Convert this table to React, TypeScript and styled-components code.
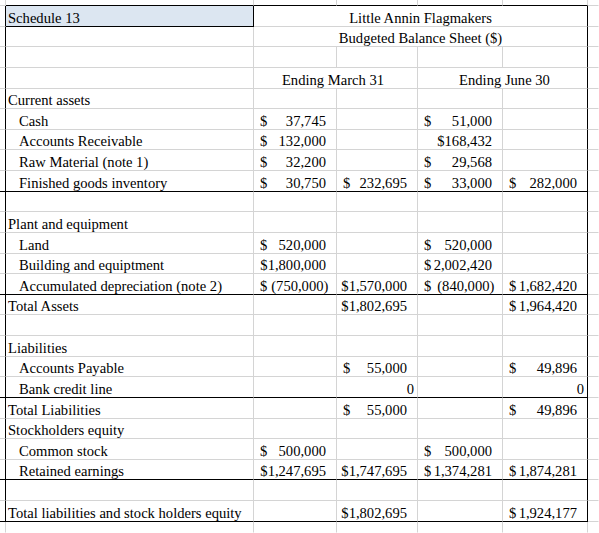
import styled, { createGlobalStyle } from 'styled-components';

type Line = 'gray' | 'black' | 'none';

//金額セルの種類
type Amount =
  | { kind: 'acct'; value: string }
  | { kind: 'cur'; value: string }
  | { kind: 'plain'; value: string }
  | null;

type RowData = {
  label?: string;
  indent?: boolean;
  boxed?: boolean;
  title?: string;
  ending?: [string, string];
  cells?: Amount[];
  rule?: boolean;
};

const acct = (value: string): Amount => ({ kind: 'acct', value });
const cur = (value: string): Amount => ({ kind: 'cur', value });
const plain = (value: string): Amount => ({ kind: 'plain', value });

const rows: RowData[] = [
  { label: 'Schedule 13', boxed: true, title: 'Little Annin Flagmakers' },
  { title: 'Budgeted Balance Sheet ($)' },
  {},
  { ending: ['Ending March 31', 'Ending June 30'] },
  { label: 'Current assets' },
  { label: 'Cash', indent: true, cells: [acct('37,745'), null, acct('51,000'), null] },
  { label: 'Accounts Receivable', indent: true, cells: [acct('132,000'), null, cur('$168,432'), null] },
  { label: 'Raw Material (note 1)', indent: true, cells: [acct('32,200'), null, acct('29,568'), null] },
  {
    label: 'Finished goods inventory',
    indent: true,
    cells: [acct('30,750'), acct('232,695'), acct('33,000'), acct('282,000')],
    rule: true,
  },
  {},
  { label: 'Plant and equipment' },
  { label: 'Land', indent: true, cells: [acct('520,000'), null, acct('520,000'), null] },
  { label: 'Building and equiptment', indent: true, cells: [cur('$1,800,000'), null, acct('2,002,420'), null] },
  {
    label: 'Accumulated depreciation (note 2)',
    indent: true,
    cells: [acct('(750,000)'), cur('$1,570,000'), acct('(840,000)'), acct('1,682,420')],
    rule: true,
  },
  { label: 'Total Assets', cells: [null, cur('$1,802,695'), null, acct('1,964,420')] },
  {},
  { label: 'Liabilities' },
  { label: 'Accounts Payable', indent: true, cells: [null, acct('55,000'), null, acct('49,896')] },
  { label: 'Bank credit line', indent: true, cells: [null, plain('0'), null, plain('0')], rule: true },
  { label: 'Total Liabilities', cells: [null, acct('55,000'), null, acct('49,896')] },
  { label: 'Stockholders equity' },
  { label: 'Common stock', indent: true, cells: [acct('500,000'), null, acct('500,000'), null] },
  {
    label: 'Retained earnings',
    indent: true,
    cells: [cur('$1,247,695'), cur('$1,747,695'), acct('1,374,281'), acct('1,874,281')],
    rule: true,
  },
  {},
  {
    label: 'Total liabilities and stock holders equity',
    cells: [null, cur('$1,802,695'), null, acct('1,924,177')],
    rule: true,
  },
];

const AmountValue = ({ amount, last }: { amount: Amount; last: boolean }) => {
  const right: Line = last ? 'black' : 'gray';
  if (!amount) return <Cell $right={right} />;
  if (amount.kind === 'plain') {
    return <AmountCell $right={right} $kind="plain">{amount.value}</AmountCell>;
  }
  if (amount.kind === 'cur') {
    return <AmountCell $right={right} $kind="cur">{amount.value}</AmountCell>;
  }
  const negative = amount.value.endsWith(')');
  return (
    <AmountCell $right={right} $kind="acct">
      <span>$</span>
      {negative ? (
        <span>
          {amount.value.slice(0, -1)}
          <Paren>)</Paren>
        </span>
      ) : (
        <span>{amount.value}</span>
      )}
    </AmountCell>
  );
};

export default function App() {
  return (
    <>
      <GlobalStyle />
      <Sheet>
        {/* 上の見切れ行 */}
        <Cell />
        {[0, 1, 2, 3, 4].map(i => (
          <Cell key={i} $bottom="black" />
        ))}
        <Cell $right="none" />

        {rows.map((row, r) => {
          const bottom: Line = row.rule ? 'black' : 'gray';
          return [
            <Cell key={`${r}-edge`} $right="black" $bottom={bottom} />,
            <LabelCell
              key={`${r}-a`}
              $indent={row.indent}
              $fill={row.boxed ? '#dce6f1' : undefined}
              $right={row.boxed ? 'black' : 'gray'}
              $bottom={row.boxed ? 'black' : bottom}
            >
              {row.label}
            </LabelCell>,
            ...(row.title
              ? [
                  <TitleCell key={`${r}-t`} $span={4} $right="black" $bottom={bottom}>
                    {row.title}
                  </TitleCell>,
                ]
              : row.ending
                ? [
                    <TitleCell key={`${r}-e1`} $span={2} $bottom={bottom} $shift={-5}>
                      {row.ending[0]}
                    </TitleCell>,
                    <TitleCell key={`${r}-e2`} $span={2} $right="black" $bottom={bottom} $shift={4}>
                      {row.ending[1]}
                    </TitleCell>,
                  ]
                : [0, 1, 2, 3].map(c =>
                    row.rule ? (
                      <RuledWrap key={`${r}-${c}`}>
                        <AmountValue amount={row.cells?.[c] ?? null} last={c === 3} />
                      </RuledWrap>
                    ) : (
                      <AmountValue key={`${r}-${c}`} amount={row.cells?.[c] ?? null} last={c === 3} />
                    ),
                  )),
            <Cell key={`${r}-f`} $right="none" />,
          ];
        })}

        {/* 下の見切れ行 */}
        {[0, 1, 2, 3, 4, 5].map(i => (
          <Cell key={`b${i}`} $bottom="none" />
        ))}
        <Cell $right="none" $bottom="none" />
      </Sheet>
    </>
  );
}

const lineColor = (line: Line) => {
  if (line === 'black') return '#000';
  if (line === 'gray') return '#d4d4d4';
  return 'transparent';
};

const GlobalStyle = createGlobalStyle`
  html, body {
    margin: 0;
    padding: 0;
    background: #fff;
  }
  body {
    font-family: "Liberation Serif", "Times New Roman", serif;
    font-size: 14.6px;
    color: #000;
  }
`;

const Sheet = styled.div`
  display: grid;
  grid-template-columns: 6px 248px 83px 81px 85px 85px 1fr;
  grid-template-rows: 6px repeat(25, 20.64px) 1fr;
  width: 599px;
  height: 533px;
  overflow: hidden;
`;

const Cell = styled.div<{ $right?: Line; $bottom?: Line; $span?: number; $fill?: string }>`
  box-sizing: border-box;
  min-width: 0;
  display: flex;
  align-items: flex-end;
  line-height: 16px;
  white-space: nowrap;
  grid-column: span ${p => p.$span ?? 1};
  border-right: 1px solid ${p => lineColor(p.$right ?? 'gray')};
  border-bottom: 1px solid ${p => lineColor(p.$bottom ?? 'gray')};
  background: ${p => p.$fill ?? 'transparent'};
`;

// 罫線の行では中のセルの下線を黒にする
const RuledWrap = styled.div`
  display: contents;
  & > div {
    border-bottom-color: #000;
  }
`;

const LabelCell = styled(Cell)<{ $indent?: boolean }>`
  padding-left: ${p => (p.$indent ? '13px' : '2px')};
  overflow: hidden;
`;

const TitleCell = styled(Cell)<{ $shift?: number }>`
  justify-content: center;
  padding-left: ${p => (p.$shift && p.$shift > 0 ? p.$shift : 0)}px;
  padding-right: ${p => (p.$shift && p.$shift < 0 ? -p.$shift : 0)}px;
`;

const AmountCell = styled(Cell)<{ $kind: 'acct' | 'cur' | 'plain' }>`
  justify-content: ${p => (p.$kind === 'acct' ? 'space-between' : 'flex-end')};
  padding-left: 6px;
  padding-right: ${p => (p.$kind === 'plain' ? '3px' : '10px')};
`;

const Paren = styled.span`
  margin-right: -2.4px;
`;
